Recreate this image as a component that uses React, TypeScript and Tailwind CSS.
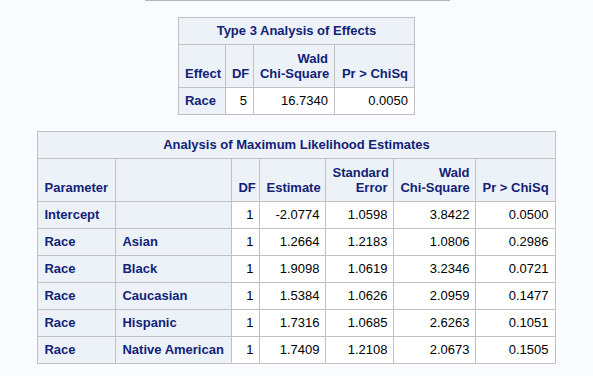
import React from "react";

const th = "border border-[#c1c1c1] bg-[#edf2f9] text-[#112277] font-bold px-[6px] pt-[5px] pb-[6px] align-bottom whitespace-nowrap overflow-hidden";
const th2 = "border border-[#c1c1c1] bg-[#edf2f9] text-[#112277] font-bold px-[6px] pt-[6px] pb-[6px] align-bottom whitespace-nowrap overflow-hidden";
const td = "border border-[#c1c1c1] bg-white text-black px-[6px] pt-[5px] pb-[6px] text-right whitespace-nowrap overflow-hidden";

export default function App() {
  const rows = [
    ["Intercept", "", "1", "-2.0774", "1.0598", "3.8422", "0.0500"],
    ["Race", "Asian", "1", "1.2664", "1.2183", "1.0806", "0.2986"],
    ["Race", "Black", "1", "1.9098", "1.0619", "3.2346", "0.0721"],
    ["Race", "Caucasian", "1", "1.5384", "1.0626", "2.0959", "0.1477"],
    ["Race", "Hispanic", "1", "1.7316", "1.0685", "2.6263", "0.1051"],
    ["Race", "Native American", "1", "1.7409", "1.2108", "2.0673", "0.1505"],
  ];
  return (
    <div
      className="w-[593px] h-[376px] bg-[#fafbfe] flex flex-col items-center text-[13px] leading-[15px]"
      style={{ fontFamily: '"Liberation Sans", Arial, sans-serif' }}
    >
      <div className="w-[305px] h-px bg-[#b0b7bb] shrink-0 translate-x-[1px]" />
      <table className="mt-[16px] border-collapse table-fixed w-[237px]">
        <colgroup>
          <col className="w-[47px]" />
          <col className="w-[28px]" />
          <col className="w-[81px]" />
          <col className="w-[80px]" />
        </colgroup>
        <thead>
          <tr>
            <th colSpan={4} className={th + " text-center align-middle"}>Type 3 Analysis of Effects</th>
          </tr>
          <tr>
            <th className={th2 + " text-left"}>Effect</th>
            <th className={th2 + " text-right"}>DF</th>
            <th className={th2 + " text-right"}>Wald<br />Chi-Square</th>
            <th className={th2 + " text-right"}>Pr &gt; ChiSq</th>
          </tr>
        </thead>
        <tbody>
          <tr>
            <th className={th + " text-left align-middle"}>Race</th>
            <td className={td}>5</td>
            <td className={td}>16.7340</td>
            <td className={td}>0.0050</td>
          </tr>
        </tbody>
      </table>
      <table className="mt-[16px] border-collapse table-fixed w-[518px]">
        <colgroup>
          <col className="w-[78px]" />
          <col className="w-[116px]" />
          <col className="w-[28px]" />
          <col className="w-[66px]" />
          <col className="w-[68px]" />
          <col className="w-[82px]" />
          <col className="w-[79px]" />
        </colgroup>
        <thead>
          <tr>
            <th colSpan={7} className={th + " text-center align-middle"}>Analysis of Maximum Likelihood Estimates</th>
          </tr>
          <tr>
            <th className={th2 + " text-left"}>Parameter</th>
            <th className={th2 + " text-left"}></th>
            <th className={th2 + " text-right"}>DF</th>
            <th className={th2 + " text-right"}>Estimate</th>
            <th className={th2 + " text-right"}>Standard<br />Error</th>
            <th className={th2 + " text-right"}>Wald<br />Chi-Square</th>
            <th className={th2 + " text-right"}>Pr &gt; ChiSq</th>
          </tr>
        </thead>
        <tbody>
          {rows.map((r, i) => (
            <tr key={i}>
              <th className={th + " text-left align-middle"}>{r[0]}</th>
              <th className={th + " text-left align-middle"}>{r[1]}</th>
              <td className={td}>{r[2]}</td>
              <td className={td}>{r[3]}</td>
              <td className={td}>{r[4]}</td>
              <td className={td}>{r[5]}</td>
              <td className={td}>{r[6]}</td>
            </tr>
          ))}
        </tbody>
      </table>
    </div>
  );
}
